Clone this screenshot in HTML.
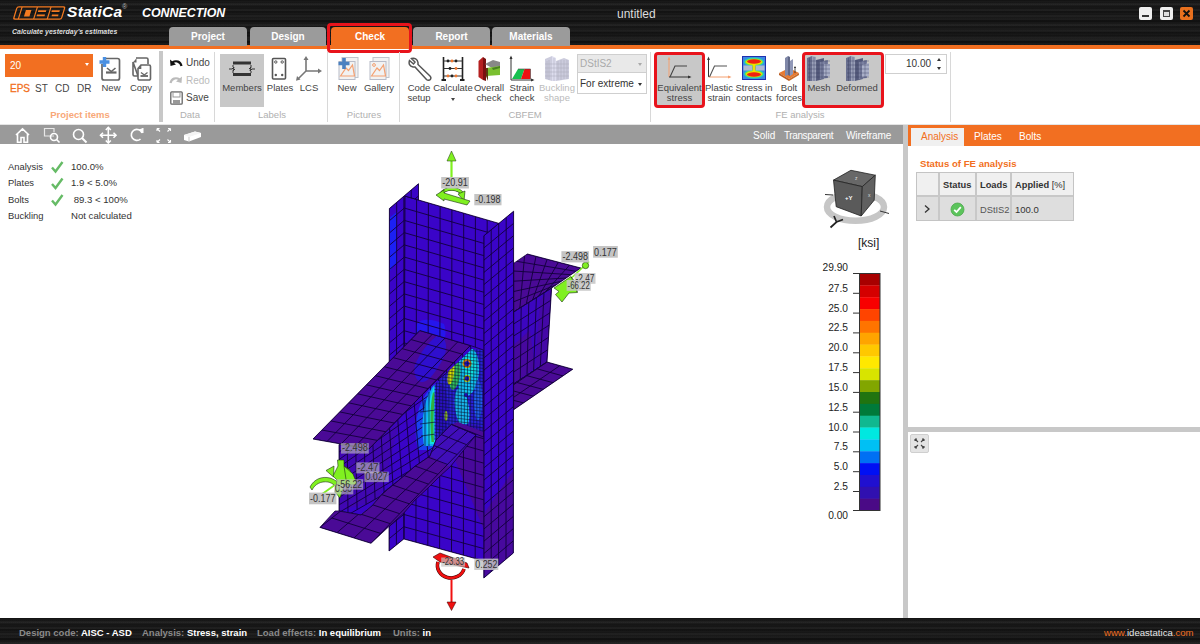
<!DOCTYPE html>
<html><head><meta charset="utf-8">
<style>
*{margin:0;padding:0;box-sizing:border-box}
html,body{width:1200px;height:644px;overflow:hidden;background:#fff;font-family:"Liberation Sans",sans-serif;position:relative}
.a{position:absolute;white-space:nowrap}
.brush{background-color:#0c0c0c;background-image:repeating-linear-gradient(180deg,rgba(255,255,255,0) 0px,rgba(255,255,255,0.05) 1px,rgba(255,255,255,0) 3px),repeating-linear-gradient(180deg,rgba(0,0,0,0) 0px,rgba(0,0,0,0.35) 2px,rgba(0,0,0,0) 5px),repeating-linear-gradient(180deg,rgba(255,255,255,0) 0px,rgba(255,255,255,0.06) 3px,rgba(255,255,255,0) 7px),repeating-linear-gradient(180deg,rgba(255,255,255,0) 0px,rgba(255,255,255,0.04) 5px,rgba(255,255,255,0) 11px)}
.tab{position:absolute;top:27px;height:19px;background:#9b9b9b;border-radius:4px 4px 0 0;color:#fff;font-weight:bold;font-size:10px;text-align:center;line-height:19px}
.lbl{position:absolute;font-size:9.5px;color:#b0b0b0;text-align:center}
.btxt{position:absolute;font-size:9.5px;color:#444;text-align:center;line-height:10px}
.sep{position:absolute;top:52px;width:1px;height:70px;background:#d8d8d8}
</style></head><body>
<!-- title bar -->
<div class="a brush" style="left:0;top:0;width:1200px;height:45px"></div>
<div class="a" style="left:0;top:45px;width:1200px;height:4px;background:#f26f21"></div>
<!-- logo -->
<svg class="a" style="left:0;top:0" width="140" height="40" viewBox="0 0 140 40">
 <g transform="skewX(-17)" fill="#f47a20">
  <rect x="19.3" y="6.9" width="47.8" height="12.2" rx="1.6" fill="none" stroke="#f47a20" stroke-width="1.3"/>
  <rect x="23.6" y="6.9" width="1.2" height="12.2"/>
  <rect x="38.9" y="6.9" width="1.2" height="12.2"/>
  <rect x="52.5" y="6.9" width="1.2" height="12.2"/>
  <rect x="29" y="10" width="5.5" height="6.5"/>
  <rect x="41.5" y="10.3" width="8" height="1.6"/>
  <rect x="41.5" y="14.6" width="8" height="1.6"/>
  <rect x="55" y="10.3" width="8" height="1.6"/>
  <rect x="56.5" y="14.6" width="6.5" height="1.6"/>
 </g>
</svg>
<div class="a" style="left:67px;top:3px;font-size:15.5px;font-style:italic;font-weight:bold;color:#fff;letter-spacing:0.3px">StatiCa</div>
<div class="a" style="left:122px;top:3px;font-size:7px;color:#bbb">®</div>
<div class="a" style="left:12px;top:26.5px;font-size:7.6px;font-style:italic;font-weight:bold;color:#ddd;letter-spacing:0px;transform:scaleX(0.92);transform-origin:0 0">Calculate yesterday's estimates</div>
<div class="a" style="left:142px;top:5.5px;font-size:12.4px;font-style:italic;font-weight:bold;color:#fff;letter-spacing:0px">CONNECTION</div>
<div class="a" style="left:617px;top:7px;font-size:12px;color:#ddd">untitled</div>
<!-- window buttons -->
<div class="a" style="left:1139px;top:7px;width:13px;height:13px;background:#eee;border-radius:2px"><div class="a" style="left:3px;top:8px;width:7px;height:2px;background:#333"></div></div>
<div class="a" style="left:1160px;top:7px;width:13px;height:13px;background:#eee;border-radius:2px"><div class="a" style="left:3px;top:3px;width:7px;height:7px;border:1px solid #444;border-top-width:2px;background:#ddd"></div></div>
<div class="a" style="left:1180px;top:7px;width:13px;height:13px;background:#e8701e;border-radius:2px"></div><svg class="a" style="left:1180px;top:7px" width="13" height="13" viewBox="0 0 13 13"><path d="M3.5 3.5 L9.5 9.5 M9.5 3.5 L3.5 9.5" stroke="#111" stroke-width="1.8"/></svg>
<!-- tabs -->
<div class="tab" style="left:169px;width:78px">Project</div>
<div class="tab" style="left:250px;width:76px">Design</div>
<div class="tab" style="left:331px;width:78px;background:#f26f21">Check</div>
<div class="tab" style="left:413px;width:77px">Report</div>
<div class="tab" style="left:492px;width:78px">Materials</div>
<div class="a" style="left:327px;top:23px;width:85px;height:30px;border:3px solid #e8131b;border-radius:4px"></div>

<!-- ribbon -->

<!-- Project items -->
<div class="a" style="left:5px;top:54px;width:88px;height:23px;background:#f26f21"></div>
<div class="a" style="left:10px;top:60px;font-size:10px;color:#fff">20</div>
<div class="a" style="left:85px;top:63px;width:0;height:0;border-left:2.5px solid transparent;border-right:2.5px solid transparent;border-top:3px solid #fff"></div>
<div class="a" style="left:10px;top:83px;font-size:10px;color:#f26f21;-webkit-text-stroke:0.3px #f26f21">EPS</div>
<div class="a" style="left:35px;top:83px;font-size:10px;color:#444">ST</div>
<div class="a" style="left:55px;top:83px;font-size:10px;color:#444">CD</div>
<div class="a" style="left:77px;top:83px;font-size:10px;color:#444">DR</div>
<svg class="a" style="left:98px;top:55px" width="26" height="28" viewBox="0 0 26 28">
 <path d="M8 3.5 H19.5 a2 2 0 0 1 2 2 V23 a2 2 0 0 1 -2 2 H6 a2 2 0 0 1 -2 -2 V9" fill="none" stroke="#666" stroke-width="1.7"/>
 <path d="M8 17.5 H18.5" stroke="#666" stroke-width="2.2"/>
 <path d="M9 13 L13.3 16.5 L17.5 13" fill="none" stroke="#666" stroke-width="1.6"/>
 <path d="M6.5 2 V12 M1.5 7 H11.5" stroke="#4a90e2" stroke-width="3.4"/>
</svg>
<div class="btxt" style="left:98px;top:83px;width:26px">New</div>
<svg class="a" style="left:130px;top:55px" width="24" height="28" viewBox="0 0 24 28">
 <path d="M6 3 H16.5 a1.5 1.5 0 0 1 1.5 1.5 V9 M8 21 H4.5 a1.5 1.5 0 0 1 -1.5 -1.5 V7 Z" fill="none" stroke="#666" stroke-width="1.6"/>
 <path d="M3 7.5 L6.5 3 V7.5 Z" fill="#666"/>
 <path d="M11 10 H19 a1.5 1.5 0 0 1 1.5 1.5 V23.5 a1.5 1.5 0 0 1 -1.5 1.5 H9.5 a1.5 1.5 0 0 1 -1.5 -1.5 V13.5 Z" fill="#fff" stroke="#666" stroke-width="1.6"/>
 <path d="M8 14 L11.3 10 V14 Z" fill="#666"/>
 <path d="M10.5 21 H18" stroke="#666" stroke-width="1.8"/>
 <path d="M11 17.5 L14.3 20 L17.5 17.5" fill="none" stroke="#666" stroke-width="1.3"/>
</svg>
<div class="btxt" style="left:128px;top:83px;width:26px">Copy</div>
<div class="lbl" style="left:40px;top:109px;width:80px;color:#f8a878;font-weight:bold;font-size:9.5px">Project items</div>
<div class="a" style="left:159px;top:51px;width:4px;height:71px;background:#c8c8c8"></div>
<!-- Data -->
<svg class="a" style="left:169px;top:58px" width="14" height="10" viewBox="0 0 14 10">
 <path d="M12.5 8 C11.5 3.5 7 2 3.5 4.5" fill="none" stroke="#111" stroke-width="2.2"/>
 <path d="M1 1.5 L1.5 8 L7 6.5 Z" fill="#111"/>
</svg>
<div class="a" style="left:186px;top:57px;font-size:10px;color:#444">Undo</div>
<svg class="a" style="left:169px;top:75px" width="14" height="10" viewBox="0 0 14 10">
 <path d="M1.5 8 C2.5 3.5 7 2 10.5 4.5" fill="none" stroke="#bbb" stroke-width="2.2"/>
 <path d="M13 1.5 L12.5 8 L7 6.5 Z" fill="#bbb"/>
</svg>
<div class="a" style="left:186px;top:75px;font-size:10px;color:#bbb">Redo</div>
<svg class="a" style="left:170px;top:91px" width="13" height="14" viewBox="0 0 13 14">
 <rect x="0.8" y="0.8" width="11.4" height="12.4" rx="1" fill="none" stroke="#666" stroke-width="1.3"/>
 <rect x="3" y="1" width="7" height="5" fill="none" stroke="#999" stroke-width="1"/>
 <rect x="3" y="9" width="7" height="4" fill="#999"/>
</svg>
<div class="a" style="left:186px;top:92px;font-size:10px;color:#444">Save</div>
<div class="lbl" style="left:170px;top:109px;width:40px">Data</div>
<div class="sep" style="left:214px"></div>
<!-- Labels -->
<div class="a" style="left:220px;top:54px;width:44px;height:53px;background:#c8c8c8"></div>
<svg class="a" style="left:228px;top:58px" width="28" height="22" viewBox="0 0 28 22">
 <rect x="5" y="3.5" width="18" height="3" fill="#333"/>
 <rect x="5" y="15" width="18" height="3" fill="#333"/>
 <path d="M1 11 H4 L6 9 L5 13 L7 11 M27 11 H24 L22 13 L23 9 L21 11" fill="none" stroke="#333" stroke-width="1"/>
 <path d="M5 7 V9 M23 7 V9 M5 13 V15 M23 13 V15" stroke="#333" stroke-width="1"/>
</svg>
<div class="btxt" style="left:218px;top:83px;width:48px">Members</div>
<svg class="a" style="left:271px;top:57px" width="16" height="24" viewBox="0 0 16 24">
 <rect x="1.5" y="1.5" width="13" height="20.5" rx="1" fill="none" stroke="#555" stroke-width="1.6"/>
 <circle cx="4.8" cy="5" r="1.2" fill="none" stroke="#555" stroke-width="1"/><circle cx="11.2" cy="5" r="1.2" fill="none" stroke="#555" stroke-width="1"/>
 <circle cx="4.8" cy="18" r="1.2" fill="#555"/><circle cx="11.2" cy="18" r="1.2" fill="#555"/>
</svg>
<div class="btxt" style="left:266px;top:83px;width:28px">Plates</div>
<svg class="a" style="left:294px;top:55px" width="30" height="28" viewBox="0 0 30 28">
 <path d="M12 16 V4 M12 16 H25 M12 16 L4 24" stroke="#777" stroke-width="1.6" fill="none"/>
 <path d="M9.5 5 L12 1 L14.5 5 Z M24 13.5 L28 16 L24 18.5 Z M2 25.8 L3 21 L6.5 24.5 Z" fill="#777"/>
</svg>
<div class="btxt" style="left:296px;top:83px;width:26px">LCS</div>
<div class="lbl" style="left:242px;top:109px;width:60px">Labels</div>
<div class="sep" style="left:327px"></div>
<!-- Pictures -->
<svg class="a" style="left:334px;top:55px" width="28" height="26" viewBox="0 0 28 26">
 <rect x="8" y="2.5" width="16" height="20" fill="#f2f2f2" stroke="#c0c4cc" stroke-width="1"/>
 <rect x="5" y="6.5" width="16" height="18" fill="#f2f2f2" stroke="#b8bcc8" stroke-width="1"/>
 <path d="M6.5 21 L12 13 L14.5 15.5 L18.5 10 L20.5 21 Z" fill="none" stroke="#f4a070" stroke-width="1.2"/>
 <path d="M10 3 V14 M4.5 8.5 H15.5" stroke="#4a80c0" stroke-width="3.6"/>
</svg>
<div class="btxt" style="left:334px;top:83px;width:26px">New</div>
<svg class="a" style="left:365px;top:55px" width="28" height="26" viewBox="0 0 28 26">
 <rect x="8" y="2.5" width="16" height="20" fill="#f2f2f2" stroke="#c0c4cc" stroke-width="1"/>
 <rect x="5" y="6.5" width="16" height="18" fill="#f2f2f2" stroke="#b8bcc8" stroke-width="1"/>
 <path d="M6.5 21 L12 13 L14.5 15.5 L18.5 10 L20.5 21 Z" fill="none" stroke="#f4a070" stroke-width="1.2"/>
 <circle cx="9" cy="10" r="1.4" fill="none" stroke="#f4a070" stroke-width="1"/>
</svg>
<div class="btxt" style="left:362px;top:83px;width:34px">Gallery</div>
<div class="lbl" style="left:334px;top:109px;width:60px">Pictures</div>
<div class="sep" style="left:399px"></div>
<!-- CBFEM -->
<svg class="a" style="left:406px;top:56px" width="26" height="26" viewBox="0 0 26 26">
 <path d="M3.5 4.5 C2.5 7.5 3.5 10.5 7 11 L9 11 L20.5 23.5 C21.5 24.5 23.5 24.5 24.3 23.5 C25 22.5 25 21 24 20 L12 8.5 L12 6.5 C11.5 3 8.5 1.5 5.5 2.5 L9 6 L7.5 8 Z" fill="none" stroke="#555" stroke-width="1.5"/>
</svg>
<div class="btxt" style="left:404px;top:83px;width:30px">Code<br>setup</div>
<svg class="a" style="left:441px;top:56px" width="24" height="26" viewBox="0 0 24 26">
 <path d="M2.5 1 V24 M21.5 1 V24" stroke="#222" stroke-width="1.6"/>
 <path d="M2.5 5 H21.5 M2.5 12.5 H21.5 M2.5 20 H21.5" stroke="#333" stroke-width="1"/>
 <path d="M0.5 24 H5 M19 24 H23.5" stroke="#222" stroke-width="2"/>
 <circle cx="7" cy="5" r="1.4" fill="#222"/><circle cx="11" cy="5" r="1.4" fill="#f07830"/><circle cx="15" cy="5" r="1.4" fill="#222"/>
 <circle cx="9" cy="12.5" r="1.4" fill="#222"/><circle cx="15" cy="12.5" r="1.4" fill="#f07830"/>
 <circle cx="7" cy="20" r="1.4" fill="#f07830"/><circle cx="11" cy="20" r="1.4" fill="#222"/><circle cx="15" cy="20" r="1.4" fill="#f07830"/>
</svg>
<div class="btxt" style="left:433px;top:83px;width:40px">Calculate</div>
<div class="a" style="left:451px;top:98px;width:0;height:0;border-left:2.5px solid transparent;border-right:2.5px solid transparent;border-top:3px solid #444"></div>
<svg class="a" style="left:477px;top:56px" width="26" height="26" viewBox="0 0 26 26">
 <path d="M1.5 5 L6 1 V24 L1.5 21 Z" fill="#b52020"/>
 <path d="M6 1 L9 3 V25 L6 24 Z" fill="#7a1010"/>
 <path d="M8 8 L16 4 L23 6 L23 10 L15 12 Z" fill="#888"/>
 <path d="M9 12 L23 10 V19 L9 20 Z" fill="#7ac030"/>
 <path d="M9 20 L11 25 V12 L9 12 Z" fill="#5a3a10"/>
 <path d="M15 12 L23 10 L23 12 L16 14 Z" fill="#4a8020"/>
</svg>
<div class="btxt" style="left:472px;top:83px;width:34px">Overall<br>check</div>
<svg class="a" style="left:509px;top:55px" width="26" height="28" viewBox="0 0 26 28">
 <path d="M2 2 V25 H24" fill="none" stroke="#333" stroke-width="1"/>
 <path d="M0.5 4 L2 0.5 L3.5 4 Z M22 23.5 L25.5 25 L22 26.5 Z" fill="#333"/>
 <path d="M3 24 L9 14 H15.5 L12 24 Z" fill="#17c050"/>
 <path d="M15.5 14 H21.5 V24 H12 Z" fill="#ee1111"/>
 <path d="M9 14 H21.5 V24" fill="none" stroke="#444" stroke-width="0.6"/>
</svg>
<div class="btxt" style="left:507px;top:83px;width:30px">Strain<br>check</div>
<svg class="a" style="left:544px;top:55px" width="27" height="27" viewBox="0 0 27 27">
 <path d="M1 4 L8 1 V26 L1 24 Z" fill="#ccd" />
 <path d="M8 1 L12 3 V26 H8 Z" fill="#dde"/>
 <path d="M12 6 L20 3 L25 5 V24 L12 26 Z" fill="#ccd"/>
 <path d="M3 6 V24 M5 5 V25 M10 3 V26 M14 6 V25 M17 5 V25 M20 5 V24 M23 5 V24 M1 9 H25 M1 13 H25 M1 17 H25 M1 21 H25" stroke="#aab" stroke-width="0.5"/>
</svg>
<div class="btxt" style="left:537px;top:83px;width:40px;color:#bbb">Buckling<br>shape</div>
<div class="a" style="left:577px;top:54px;width:70px;height:40px;border:1px solid #cfcfcf;background:#fff"></div>
<div class="a" style="left:578px;top:55px;width:68px;height:18px;background:#e9e9e9;border-bottom:1px solid #cfcfcf"></div>
<div class="a" style="left:580px;top:58px;font-size:10px;color:#aaa">DStIS2</div>
<div class="a" style="left:638px;top:63px;width:0;height:0;border-left:2.5px solid transparent;border-right:2.5px solid transparent;border-top:3px solid #aaa"></div>
<div class="a" style="left:580px;top:78px;font-size:10px;color:#333">For extreme</div>
<div class="a" style="left:638px;top:83px;width:0;height:0;border-left:2.5px solid transparent;border-right:2.5px solid transparent;border-top:3px solid #333"></div>
<div class="lbl" style="left:495px;top:109px;width:60px">CBFEM</div>
<div class="sep" style="left:650px"></div>
<!-- FE analysis -->
<div class="a" style="left:654px;top:52px;width:51px;height:56px;background:#c8c8c8;border:3px solid #e8131b;border-radius:4px"></div>
<svg class="a" style="left:665px;top:55px" width="30" height="26" viewBox="0 0 30 26">
 <path d="M4 3 V22" stroke="#f4a070" stroke-width="1"/><path d="M2.6 5 L4 1.5 L5.4 5 Z" fill="#f4a070"/>
 <path d="M4 22 H25" stroke="#333" stroke-width="1"/><path d="M23 20.5 L26.5 22 L23 23.5 Z" fill="#333"/>
 <path d="M5 22 L10 11 H22" fill="none" stroke="#444" stroke-width="1.1"/>
</svg>
<div class="btxt" style="left:654px;top:83px;width:51px">Equivalent<br>stress</div>
<svg class="a" style="left:705px;top:55px" width="30" height="26" viewBox="0 0 30 26">
 <path d="M3.5 3 V22" stroke="#333" stroke-width="1"/><path d="M2.1 5 L3.5 1.5 L4.9 5 Z" fill="#333"/>
 <path d="M3.5 22 H25" stroke="#f4a070" stroke-width="1"/><path d="M23 20.5 L26.5 22 L23 23.5 Z" fill="#f4a070"/>
 <path d="M4.5 22 L9.5 11 H22" fill="none" stroke="#555" stroke-width="1.1"/>
</svg>
<div class="btxt" style="left:704px;top:83px;width:30px">Plastic<br>strain</div>
<svg class="a" style="left:742px;top:56px" width="24" height="24" viewBox="0 0 24 24">
 <rect x="0" y="0" width="24" height="24" fill="#2030b0"/>
 <rect x="1" y="1" width="22" height="22" fill="#3a8ae0"/>
 <ellipse cx="12" cy="6" rx="10" ry="4.5" fill="#20d0c0"/>
 <ellipse cx="12" cy="18" rx="10" ry="4.5" fill="#20d0c0"/>
 <ellipse cx="12" cy="6" rx="9" ry="3.5" fill="#90e020"/>
 <ellipse cx="12" cy="18" rx="9" ry="3.5" fill="#90e020"/>
 <ellipse cx="12" cy="6" rx="8" ry="2.8" fill="#f0e000"/>
 <ellipse cx="12" cy="18" rx="8" ry="2.8" fill="#f0e000"/>
 <ellipse cx="12" cy="5.5" rx="7" ry="2.2" fill="#f02010"/>
 <ellipse cx="12" cy="18.5" rx="7" ry="2.2" fill="#f02010"/>
 <rect x="1.5" y="9.5" width="8.5" height="5" fill="#b0b8d0"/>
 <rect x="14" y="9.5" width="8.5" height="5" fill="#b0b8d0"/>
 <rect x="10.5" y="8" width="3" height="8" fill="#f0e000"/>
</svg>
<div class="btxt" style="left:732px;top:83px;width:44px">Stress in<br>contacts</div>
<svg class="a" style="left:777px;top:55px" width="24" height="26" viewBox="0 0 24 26">
 <path d="M2 18 L12 13 L22 18 L12 24 Z" fill="#e87a30"/>
 <path d="M2 18 V20 L12 26 V24 Z" fill="#b85a20"/><path d="M22 18 V20 L12 26 V24 Z" fill="#c86a28"/>
 <path d="M8 3 L11 1 V20 L8 21 Z" fill="#8088a8"/>
 <path d="M11 1 L13 2 V21 L11 20 Z" fill="#606888"/>
 <path d="M13 6 L16 4 V19 L13 21 Z" fill="#9098b8"/>
 <path d="M18 12 V18" stroke="#222" stroke-width="0.8"/><path d="M17 13 L18 11 L19 13 Z" fill="#222"/>
</svg>
<div class="btxt" style="left:771px;top:83px;width:36px">Bolt<br>forces</div>
<div class="a" style="left:802px;top:52px;width:82px;height:56px;background:#c8c8c8;border:3px solid #e8131b;border-radius:4px"></div>
<svg class="a" style="left:806px;top:55px" width="26" height="26" viewBox="0 0 26 26">
 <path d="M1 3 L6 1 V26 H1 Z" fill="#6a7090"/><path d="M6 1 L10 2 V26 H6 Z" fill="#9aa0b8"/>
 <path d="M10 5 L18 3 V24 L10 26 Z" fill="#5a6080"/><path d="M14 7 L22 5 V23 L14 24 Z" fill="#7a80a0"/>
 <path d="M18 9 H24 V21 H18 Z" fill="#aab0c8"/>
 <path d="M2 6 H24 M2 10 H24 M2 14 H24 M2 18 H24 M2 22 H24 M3.5 3 V26 M8 2 V26 M12 5 V25 M16 4 V24 M20 5 V23" stroke="#3a4060" stroke-width="0.4"/>
</svg>
<div class="btxt" style="left:804px;top:83px;width:30px">Mesh</div>
<svg class="a" style="left:845px;top:55px" width="26" height="26" viewBox="0 0 26 26">
 <path d="M1 3 L6 1 V26 H1 Z" fill="#6a7090"/><path d="M6 1 L10 2 V26 H6 Z" fill="#9aa0b8"/>
 <path d="M10 5 L18 3 V24 L10 26 Z" fill="#5a6080"/><path d="M14 7 L22 5 V23 L14 24 Z" fill="#7a80a0"/>
 <path d="M17 10 L24 8 V21 L17 22 Z" fill="#aab0c8"/>
 <path d="M2 6 H24 M2 10 H24 M2 14 H24 M2 18 H24 M2 22 H24 M3.5 3 V26 M8 2 V26 M12 5 V25 M16 4 V24 M20 5 V23" stroke="#3a4060" stroke-width="0.4"/>
</svg>
<div class="btxt" style="left:834px;top:83px;width:46px">Deformed</div>
<div class="a" style="left:885px;top:54px;width:62px;height:20px;border:1px solid #cfcfcf;background:#fff"></div>
<div class="a" style="left:906px;top:58px;font-size:10px;color:#333">10.00</div>
<div class="a" style="left:937px;top:58px;width:0;height:0;border-left:2.5px solid transparent;border-right:2.5px solid transparent;border-bottom:3px solid #333"></div>
<div class="a" style="left:937px;top:67px;width:0;height:0;border-left:2.5px solid transparent;border-right:2.5px solid transparent;border-top:3px solid #333"></div>
<div class="lbl" style="left:760px;top:109px;width:80px">FE analysis</div>
<div class="sep" style="left:950px"></div>
<div class="a" style="left:0;top:124px;width:1200px;height:1px;background:#e4e4e4"></div>


<!-- viewport toolbar -->
<div class="a" style="left:0;top:125px;width:903px;height:19px;background:#9a9a9a"></div>
<div class="a" style="left:903px;top:125px;width:5px;height:493px;background:#c8c8c8"></div>
<div class="a" style="left:908px;top:125px;width:292px;height:21px;background:#f26f21"></div>
<div class="a" style="left:911px;top:128px;width:53px;height:18px;background:#f0f0f0"></div>
<div class="a" style="left:921px;top:131px;font-size:10px;color:#f26f21">Analysis</div>
<div class="a" style="left:974px;top:131px;font-size:10px;color:#fff">Plates</div>
<div class="a" style="left:1019px;top:131px;font-size:10px;color:#fff">Bolts</div>
<div class="a" style="left:753px;top:130px;font-size:10px;color:#fff">Solid</div>
<div class="a" style="left:784px;top:130px;font-size:10px;color:#fff;letter-spacing:-0.4px">Transparent</div>
<div class="a" style="left:846px;top:130px;font-size:10px;color:#fff;letter-spacing:-0.1px">Wireframe</div>

<div class="a brush" style="left:0;top:618px;width:1200px;height:26px"></div>
<svg class="a" style="left:0;top:0" width="1200" height="644" viewBox="0 0 1200 644"><defs><clipPath id="c1"><polygon points="513.6,263.4 527.4,254.0 580.8,268.0 551.6,288.0 513.6,312.0"/></clipPath><clipPath id="c2"><polygon points="513.6,312.0 551.6,288.0 547.0,362.0 513.6,384.0"/></clipPath><clipPath id="c3"><polygon points="513.6,384.0 547.0,362.0 572.8,369.2 513.7,409.7"/></clipPath><clipPath id="c4"><polygon points="389.4,208.5 418.5,183.7 418.5,527.0 389.0,551.0"/></clipPath><clipPath id="c5"><polygon points="404.8,196.0 499.0,223.4 499.0,565.0 404.0,539.0"/></clipPath><clipPath id="c6"><polygon points="483.8,235.8 513.6,211.2 513.4,553.0 483.8,578.0"/></clipPath><clipPath id="c7"><polygon points="339.0,444.5 369.0,449.0 470.4,345.5 483.5,350.0 483.5,437.0 451.4,424.4 436.0,440.0 430.0,456.0 414.0,467.0 398.0,481.0 384.0,492.0 372.0,506.0 361.0,515.0 339.0,511.0"/></clipPath><clipPath id="c8"><polygon points="313.0,439.0 369.0,449.0 470.4,345.5 419.8,330.5"/></clipPath><clipPath id="c9"><polygon points="319.9,527.4 371.0,543.3 388.4,527.0 404.6,512.2 415.0,500.0 428.0,488.0 439.0,477.0 450.0,467.0 476.2,434.8 451.4,424.4 436.0,440.0 430.0,456.0 414.0,467.0 398.0,481.0 384.0,492.0 372.0,506.0 361.0,515.0 339.0,511.0 335.0,511.0"/></clipPath></defs><polygon points="513.6,263.4 527.4,254.0 580.8,268.0 551.6,288.0 513.6,312.0" fill="#4a0a96"/><g clip-path="url(#c1)"><path d="M513.6 250.5L513.6 312.0M524.8 253.4L519.9 308.0M536.0 256.3L526.3 304.0M547.2 259.2L532.6 300.0M558.4 262.2L538.9 296.0M569.6 265.1L545.3 292.0M580.8 268.0L551.6 288.0M513.6 250.5L580.8 268.0M513.6 260.8L575.9 271.3M513.6 271.0L571.1 274.7M513.6 281.2L566.2 278.0M513.6 291.5L561.3 281.3M513.6 301.8L556.5 284.7M513.6 312.0L551.6 288.0" stroke="#12003a" stroke-width="0.9" fill="none"/></g><polygon points="513.6,263.4 527.4,254.0 580.8,268.0 551.6,288.0 513.6,312.0" fill="none" stroke="#12003a" stroke-width="0.8"/><polygon points="513.6,312.0 551.6,288.0 547.0,362.0 513.6,384.0" fill="#3c06c0"/><g clip-path="url(#c2)"><polygon points="513.6,345 530,330 535,368 513.6,384" fill="#4a0a96" opacity="0.8"/><polygon points="540,300 552,288 547,362 535,368" fill="#4a0a96" opacity="0.6"/><path d="M513.6 312.0L513.6 384.0M521.2 307.2L520.3 379.6M528.8 302.4L527.0 375.2M536.4 297.6L533.6 370.8M544.0 292.8L540.3 366.4M551.6 288.0L547.0 362.0M513.6 312.0L551.6 288.0M513.6 324.0L550.8 300.3M513.6 336.0L550.1 312.7M513.6 348.0L549.3 325.0M513.6 360.0L548.5 337.3M513.6 372.0L547.8 349.7M513.6 384.0L547.0 362.0" stroke="#12003a" stroke-width="0.9" fill="none"/></g><polygon points="513.6,312.0 551.6,288.0 547.0,362.0 513.6,384.0" fill="none" stroke="#12003a" stroke-width="0.8"/><polygon points="513.6,384.0 547.0,362.0 572.8,369.2 513.7,409.7" fill="#4a0a96"/><g clip-path="url(#c3)"><path d="M547.0 362.0L487.0 403.0M559.9 365.6L500.4 406.4M572.8 369.2L513.7 409.7M547.0 362.0L572.8 369.2M537.0 368.8L562.9 375.9M527.0 375.7L553.1 382.7M517.0 382.5L543.2 389.4M507.0 389.3L533.4 396.2M497.0 396.2L523.6 402.9M487.0 403.0L513.7 409.7" stroke="#12003a" stroke-width="0.9" fill="none"/></g><polygon points="513.6,384.0 547.0,362.0 572.8,369.2 513.7,409.7" fill="none" stroke="#12003a" stroke-width="0.8"/><polygon points="389.4,208.5 418.5,183.7 418.5,527.0 389.0,551.0" fill="#3a04c8"/><g clip-path="url(#c4)"><polygon points="389,218 397,212 397,262 389,272" fill="#1c20f4"/><path d="M389.4 208.5L389.0 551.0M396.7 202.3L396.4 545.0M403.9 196.1L403.8 539.0M411.2 189.9L411.1 533.0M418.5 183.7L418.5 527.0M389.4 208.5L418.5 183.7M389.4 220.7L418.5 196.0M389.4 233.0L418.5 208.2M389.4 245.2L418.5 220.5M389.3 257.4L418.5 232.7M389.3 269.7L418.5 245.0M389.3 281.9L418.5 257.3M389.3 294.1L418.5 269.5M389.3 306.4L418.5 281.8M389.3 318.6L418.5 294.0M389.3 330.8L418.5 306.3M389.2 343.1L418.5 318.6M389.2 355.3L418.5 330.8M389.2 367.5L418.5 343.1M389.2 379.8L418.5 355.4M389.2 392.0L418.5 367.6M389.2 404.2L418.5 379.9M389.2 416.4L418.5 392.1M389.1 428.7L418.5 404.4M389.1 440.9L418.5 416.7M389.1 453.1L418.5 428.9M389.1 465.4L418.5 441.2M389.1 477.6L418.5 453.4M389.1 489.8L418.5 465.7M389.1 502.1L418.5 478.0M389.0 514.3L418.5 490.2M389.0 526.5L418.5 502.5M389.0 538.8L418.5 514.7M389.0 551.0L418.5 527.0" stroke="#12003a" stroke-width="0.9" fill="none"/></g><polygon points="389.4,208.5 418.5,183.7 418.5,527.0 389.0,551.0" fill="none" stroke="#12003a" stroke-width="0.8"/><polygon points="404.8,196.0 499.0,223.4 499.0,565.0 404.0,539.0" fill="#3a04c8"/><g clip-path="url(#c5)"><path d="M416 326 C418 318 432 318 444 324 C446 330 446 336 444 340 L416 334 Z" fill="#2418f0" opacity="0.9"/><polygon points="455,460 476,436 484,436 484,530" fill="#4a0a96" opacity="0.9"/><polygon points="404,539 404,512 420,520 450,548 484,560" fill="#4a0a96" opacity="0.0"/><path d="M404.8 196.0L404.0 539.0M416.6 199.4L415.9 542.2M428.4 202.8L427.8 545.5M440.1 206.3L439.6 548.8M451.9 209.7L451.5 552.0M463.7 213.1L463.4 555.2M475.4 216.6L475.2 558.5M487.2 220.0L487.1 561.8M499.0 223.4L499.0 565.0M404.8 196.0L499.0 223.4M404.8 208.2L499.0 235.6M404.7 220.5L499.0 247.8M404.7 232.8L499.0 260.0M404.7 245.0L499.0 272.2M404.7 257.2L499.0 284.4M404.6 269.5L499.0 296.6M404.6 281.8L499.0 308.8M404.6 294.0L499.0 321.0M404.5 306.2L499.0 333.2M404.5 318.5L499.0 345.4M404.5 330.8L499.0 357.6M404.5 343.0L499.0 369.8M404.4 355.2L499.0 382.0M404.4 367.5L499.0 394.2M404.4 379.8L499.0 406.4M404.3 392.0L499.0 418.6M404.3 404.2L499.0 430.8M404.3 416.5L499.0 443.0M404.3 428.8L499.0 455.2M404.2 441.0L499.0 467.4M404.2 453.2L499.0 479.6M404.2 465.5L499.0 491.8M404.1 477.8L499.0 504.0M404.1 490.0L499.0 516.2M404.1 502.2L499.0 528.4M404.1 514.5L499.0 540.6M404.0 526.8L499.0 552.8M404.0 539.0L499.0 565.0" stroke="#12003a" stroke-width="0.9" fill="none"/></g><polygon points="404.8,196.0 499.0,223.4 499.0,565.0 404.0,539.0" fill="none" stroke="#12003a" stroke-width="0.8"/><polygon points="483.8,235.8 513.6,211.2 513.4,553.0 483.8,578.0" fill="#3a04c8"/><g clip-path="url(#c6)"><polygon points="483,515 513.6,470 513.6,553 483,578" fill="#4a0a96" opacity="0.85"/><path d="M483.8 235.8L483.8 578.0M491.2 229.7L491.2 571.8M498.7 223.5L498.6 565.5M506.2 217.3L506.0 559.2M513.6 211.2L513.4 553.0M483.8 235.8L513.6 211.2M483.8 248.0L513.6 223.4M483.8 260.2L513.6 235.6M483.8 272.5L513.6 247.8M483.8 284.7L513.6 260.0M483.8 296.9L513.6 272.2M483.8 309.1L513.6 284.4M483.8 321.4L513.5 296.6M483.8 333.6L513.5 308.9M483.8 345.8L513.5 321.1M483.8 358.0L513.5 333.3M483.8 370.2L513.5 345.5M483.8 382.5L513.5 357.7M483.8 394.7L513.5 369.9M483.8 406.9L513.5 382.1M483.8 419.1L513.5 394.3M483.8 431.3L513.5 406.5M483.8 443.6L513.5 418.7M483.8 455.8L513.5 430.9M483.8 468.0L513.5 443.1M483.8 480.2L513.5 455.3M483.8 492.4L513.5 467.6M483.8 504.7L513.4 479.8M483.8 516.9L513.4 492.0M483.8 529.1L513.4 504.2M483.8 541.3L513.4 516.4M483.8 553.6L513.4 528.6M483.8 565.8L513.4 540.8M483.8 578.0L513.4 553.0" stroke="#12003a" stroke-width="0.9" fill="none"/></g><polygon points="483.8,235.8 513.6,211.2 513.4,553.0 483.8,578.0" fill="none" stroke="#12003a" stroke-width="0.8"/><polygon points="339.0,444.5 369.0,449.0 470.4,345.5 483.5,350.0 483.5,437.0 451.4,424.4 436.0,440.0 430.0,456.0 414.0,467.0 398.0,481.0 384.0,492.0 372.0,506.0 361.0,515.0 339.0,511.0" fill="#3a04c8"/><g clip-path="url(#c7)"><polygon points="339,444.5 369,449 400,420 380,500 339,511" fill="#4a0a96" opacity="0.45"/><path d="M434.4,384.8 C418,398 412,425 418,450 L440,450 L440,385 Z" fill="#1a40f0"/><path d="M339.0 444.5L339.0 520.0M347.2 438.3L348.0 514.8M355.4 432.1L357.1 509.6M363.6 425.9L366.1 504.4M371.9 419.8L375.1 499.2M380.1 413.6L384.2 494.1M388.3 407.4L393.2 488.9M396.5 401.2L402.2 483.7M404.7 395.0L411.2 478.5M412.9 388.8L420.3 473.3M421.1 382.6L429.3 468.1M429.3 376.4L438.3 462.9M437.5 370.2L447.4 457.8M445.8 364.1L456.4 452.6M454.0 357.9L465.4 447.4M462.2 351.7L474.5 442.2M470.4 345.5L483.5 437.0M339.0 444.5L470.4 345.5M339.0 452.1L471.7 354.6M339.0 459.6L473.0 363.8M339.0 467.1L474.3 372.9M339.0 474.7L475.6 382.1M339.0 482.2L476.9 391.2M339.0 489.8L478.3 400.4M339.0 497.4L479.6 409.6M339.0 504.9L480.9 418.7M339.0 512.5L482.2 427.9M339.0 520.0L483.5 437.0" stroke="#12003a" stroke-width="0.9" fill="none"/><path d="M434.4,384.8 C424,398 420,420 424,446 L436,446 L436,385 Z" fill="#10a8f4"/><path d="M434.4,386 C428,400 426,420 428,444 L436,444 L436,386 Z" fill="#10e0e0"/><path d="M433,392 C430,405 430,425 431.5,442 L434,442 C433,425 433.5,408 435,394 Z" fill="#30b040"/><path d="M425,400 V446 M429,392 V446 M420,412 L436,410 M420,424 L436,422 M421,436 L436,434" stroke="#0a1030" stroke-width="0.7"/><clipPath id="fine"><polygon points="434.4,384.8 471.9,349 483.5,350 483.5,437 451.4,424.4 436,440 434.4,440"/></clipPath><g clip-path="url(#fine)"><polygon points="434.4,384.8 471.9,349 483.5,350 483.5,437 451.4,424.4 436,440 434.4,440" fill="#2a20d8"/><ellipse cx="468" cy="372" rx="11" ry="24" transform="rotate(5 468 372)" fill="#10c0ec"/><ellipse cx="462" cy="408" rx="7" ry="20" transform="rotate(-8 462 408)" fill="#18b8ec"/><ellipse cx="470" cy="366" rx="6" ry="12" fill="#10e0e0"/><ellipse cx="478" cy="400" rx="4" ry="20" fill="#2060f0"/><ellipse cx="442" cy="412" rx="6" ry="28" fill="#2a10c0"/><ellipse cx="455" cy="376" rx="5" ry="14" transform="rotate(10 455 376)" fill="#30c060"/><ellipse cx="451" cy="374" rx="3" ry="11" transform="rotate(10 451 374)" fill="#d8e000"/><ellipse cx="446" cy="416" rx="1.5" ry="5" fill="#a0d020"/><ellipse cx="468" cy="430" rx="16" ry="6" fill="#3010c0"/><circle cx="467" cy="363.5" r="4.5" fill="#f09000"/><circle cx="467" cy="363.5" r="2.6" fill="#2010c0"/><circle cx="467" cy="378.5" r="3.5" fill="#c0c000"/><circle cx="467" cy="378.5" r="2.2" fill="#2010c0"/><circle cx="466" cy="395" r="2" fill="#2010c0"/><path d="M436.5 340 V445 M439.6 340 V445 M442.7 340 V445 M445.8 340 V445 M448.9 340 V445 M452.0 340 V445 M455.1 340 V445 M458.2 340 V445 M461.3 340 V445 M464.4 340 V445 M467.5 340 V445 M470.6 340 V445 M473.7 340 V445 M476.8 340 V445 M479.9 340 V445 M483.0 340 V445 M430 346.0 L484 352.0 M430 349.3 L484 355.3 M430 352.6 L484 358.6 M430 355.9 L484 361.9 M430 359.2 L484 365.2 M430 362.5 L484 368.5 M430 365.8 L484 371.8 M430 369.1 L484 375.1 M430 372.4 L484 378.4 M430 375.7 L484 381.7 M430 379.0 L484 385.0 M430 382.3 L484 388.3 M430 385.6 L484 391.6 M430 388.9 L484 394.9 M430 392.2 L484 398.2 M430 395.5 L484 401.5 M430 398.8 L484 404.8 M430 402.1 L484 408.1 M430 405.4 L484 411.4 M430 408.7 L484 414.7 M430 412.0 L484 418.0 M430 415.3 L484 421.3 M430 418.6 L484 424.6 M430 421.9 L484 427.9 M430 425.2 L484 431.2 M430 428.5 L484 434.5 M430 431.8 L484 437.8 M430 435.1 L484 441.1 M430 438.4 L484 444.4 M430 441.7 L484 447.7 " stroke="#0a1030" stroke-width="0.55"/></g><polygon points="451.4,424.4 476.2,434.8 483.5,437 483.5,432 458,422" fill="#4a0a96"/></g><polygon points="339.0,444.5 369.0,449.0 470.4,345.5 483.5,350.0 483.5,437.0 451.4,424.4 436.0,440.0 430.0,456.0 414.0,467.0 398.0,481.0 384.0,492.0 372.0,506.0 361.0,515.0 339.0,511.0" fill="none" stroke="#12003a" stroke-width="0.8"/><polygon points="313.0,439.0 369.0,449.0 470.4,345.5 419.8,330.5" fill="#4a0a96"/><g clip-path="url(#c8)"><path d="M440 334 C452 345 445 360 430 378 C420 388 412 378 415 365 C420 352 430 340 440 334 Z" fill="#2a10d8" opacity="0.85"/><path d="M419.8 330.5L313.0 439.0M432.4 334.2L327.0 441.5M445.1 338.0L341.0 444.0M457.8 341.8L355.0 446.5M470.4 345.5L369.0 449.0M419.8 330.5L470.4 345.5M410.9 339.5L461.9 354.1M402.0 348.6L453.5 362.8M393.1 357.6L445.0 371.4M384.2 366.7L436.6 380.0M375.3 375.7L428.1 388.6M366.4 384.8L419.7 397.2M357.5 393.8L411.2 405.9M348.6 402.8L402.8 414.5M339.7 411.9L394.4 423.1M330.8 420.9L385.9 431.8M321.9 430.0L377.4 440.4M313.0 439.0L369.0 449.0" stroke="#12003a" stroke-width="0.9" fill="none"/></g><polygon points="313.0,439.0 369.0,449.0 470.4,345.5 419.8,330.5" fill="none" stroke="#12003a" stroke-width="0.8"/><polygon points="319.9,527.4 371.0,543.3 388.4,527.0 404.6,512.2 415.0,500.0 428.0,488.0 439.0,477.0 450.0,467.0 476.2,434.8 451.4,424.4 436.0,440.0 430.0,456.0 414.0,467.0 398.0,481.0 384.0,492.0 372.0,506.0 361.0,515.0 339.0,511.0 335.0,511.0" fill="#4a0a96"/><g clip-path="url(#c9)"><polygon points="436,440 451.4,424.4 476.2,434.8 450,467 430,456" fill="#3a10d0" opacity="0.6"/><path d="M451.4 424.4L319.9 527.4M459.7 427.9L336.9 532.7M467.9 431.3L354.0 538.0M476.2 434.8L371.0 543.3M451.4 424.4L476.2 434.8M439.4 433.8L466.6 444.7M427.5 443.1L457.1 454.5M415.5 452.5L447.5 464.4M403.6 461.9L437.9 474.3M391.6 471.2L428.4 484.1M379.7 480.6L418.8 494.0M367.7 489.9L409.3 503.8M355.8 499.3L399.7 513.7M343.8 508.7L390.1 523.6M331.9 518.0L380.6 533.4M319.9 527.4L371.0 543.3" stroke="#12003a" stroke-width="0.9" fill="none"/></g><polygon points="319.9,527.4 371.0,543.3 388.4,527.0 404.6,512.2 415.0,500.0 428.0,488.0 439.0,477.0 450.0,467.0 476.2,434.8 451.4,424.4 436.0,440.0 430.0,456.0 414.0,467.0 398.0,481.0 384.0,492.0 372.0,506.0 361.0,515.0 339.0,511.0 335.0,511.0" fill="none" stroke="#12003a" stroke-width="0.8"/><path d="M451.5 181 V160" stroke="#80f020" stroke-width="2.2"/><path d="M447 161 L451.5 151 L456 161 Z" fill="#80f020" stroke="#1a3010" stroke-width="0.5"/><path d="M441 194 A12 9 0 0 1 463 195" fill="none" stroke="#1a3010" stroke-width="3.5"/><path d="M441 194 A12 9 0 0 1 463 195" fill="none" stroke="#80f020" stroke-width="2.5"/><path d="M458 194 L465 191 L464 201 Z" fill="#80f020" stroke="#1a3010" stroke-width="0.6"/><path d="M436 195 L444 190 L444 193 L470 201 L467 205 L444 199 L444 201 Z" fill="#80f020" stroke="#1a3010" stroke-width="0.6"/><rect x="441.2" y="177.0" width="27.7" height="11.5" fill="#c4c4c4" opacity="1.00"/><text x="442.2" y="186.3" font-size="10.5" fill="#333" font-family="Liberation Sans" textLength="25.7" lengthAdjust="spacingAndGlyphs">-20.91</text><rect x="474.3" y="194.0" width="27.2" height="11.3" fill="#c4c4c4" opacity="1.00"/><text x="475.3" y="203.1" font-size="10.5" fill="#333" font-family="Liberation Sans" textLength="25.2" lengthAdjust="spacingAndGlyphs">-0.198</text><path d="M589 261.5 L564 285" stroke="#80f020" stroke-width="1.6"/><circle cx="585.5" cy="265.5" r="3.2" fill="#80f020" stroke="#1a3010" stroke-width="0.6"/><path d="M554 288 L571 276.5 L574 283 L577.5 292.5 L569 293 L562 302 L555.5 294.5 L559 291.5 Z" fill="#80f020" stroke="#1a3010" stroke-width="0.6"/><path d="M571 277 C575 280 577 286 577 292" fill="none" stroke="#1a3010" stroke-width="0.6"/><rect x="561.4" y="251.2" width="27.5" height="11.2" fill="#c4c4c4" opacity="1.00"/><text x="562.4" y="260.2" font-size="10.5" fill="#333" font-family="Liberation Sans" textLength="25.5" lengthAdjust="spacingAndGlyphs">-2.498</text><rect x="593.1" y="246.0" width="24.7" height="11.7" fill="#c4c4c4" opacity="1.00"/><text x="594.1" y="255.5" font-size="10.5" fill="#333" font-family="Liberation Sans" textLength="22.7" lengthAdjust="spacingAndGlyphs">0.177</text><rect x="574.5" y="273.0" width="21.0" height="10.8" fill="#c4c4c4" opacity="0.85"/><text x="575.5" y="281.6" font-size="10.5" fill="#333" font-family="Liberation Sans" textLength="19.0" lengthAdjust="spacingAndGlyphs">-2.47</text><rect x="566.6" y="280.0" width="24.2" height="10.8" fill="#c4c4c4" opacity="0.85"/><text x="567.6" y="288.6" font-size="10.5" fill="#333" font-family="Liberation Sans" textLength="22.2" lengthAdjust="spacingAndGlyphs">-66.22</text><path d="M318 497 L346 477" stroke="#80f020" stroke-width="1.8"/><circle cx="318.5" cy="497" r="3.4" fill="#80f020" stroke="#1a3010" stroke-width="0.6"/><path d="M310 487 C314 479 322 476 330 478 C336 480 341 484 344 490 L340 492 C337 487 333 483 328 482 C321 481 315 484 312 490 Z" fill="#80f020" stroke="#1a3010" stroke-width="0.6"/><path d="M326 470.5 L334 466 L333.5 477 Z" fill="#80f020" stroke="#1a3010" stroke-width="0.6"/><path d="M337.5 460 L344 460 L344 466 L350 470 L352 482 L344 486 L340 498 L335 492 L337 480 L333 476 L338 466 Z" fill="#80f020" stroke="#1a3010" stroke-width="0.6"/><path d="M344 466 L353 474 L357 484 L347 486 Z" fill="#80f020" stroke="#1a3010" stroke-width="0.6"/><rect x="341.0" y="443.1" width="27.8" height="10.5" fill="#c4c4c4" opacity="0.60"/><text x="342.0" y="451.4" font-size="10.5" fill="#333" font-family="Liberation Sans" textLength="25.8" lengthAdjust="spacingAndGlyphs">-2.498</text><rect x="356.2" y="462.4" width="23.3" height="11.0" fill="#c4c4c4" opacity="0.60"/><text x="357.2" y="471.2" font-size="10.5" fill="#333" font-family="Liberation Sans" textLength="21.3" lengthAdjust="spacingAndGlyphs">-2.47</text><rect x="364.4" y="471.7" width="24.4" height="10.4" fill="#c4c4c4" opacity="0.60"/><text x="365.4" y="479.9" font-size="10.5" fill="#333" font-family="Liberation Sans" textLength="22.4" lengthAdjust="spacingAndGlyphs">0.027</text><rect x="334.0" y="484.5" width="19.3" height="9.9" fill="#c4c4c4" opacity="0.60"/><text x="335.0" y="492.2" font-size="10.5" fill="#333" font-family="Liberation Sans" textLength="17.3" lengthAdjust="spacingAndGlyphs">0.00</text><rect x="336.4" y="479.2" width="26.8" height="10.5" fill="#c4c4c4" opacity="0.60"/><text x="337.4" y="487.5" font-size="10.5" fill="#333" font-family="Liberation Sans" textLength="24.8" lengthAdjust="spacingAndGlyphs">-56.22</text><rect x="309.0" y="492.6" width="27.4" height="11.7" fill="#c4c4c4" opacity="1.00"/><text x="310.0" y="502.1" font-size="10.5" fill="#333" font-family="Liberation Sans" textLength="25.4" lengthAdjust="spacingAndGlyphs">-0.177</text><path d="M451.5 580 V603" stroke="#f01010" stroke-width="2"/><path d="M447 602 L456 602 L451.5 610.5 Z" fill="#f01010" stroke="#300000" stroke-width="0.5"/><path d="M438 562 A13 12 0 0 0 464 569" fill="none" stroke="#300000" stroke-width="3.6"/><path d="M438 562 A13 12 0 0 0 464 569" fill="none" stroke="#f01010" stroke-width="2.6"/><path d="M433 557 L440 553 L467 563 L469 568 L440 562 Z" fill="#f01010" stroke="#300000" stroke-width="0.6"/><rect x="441.2" y="557.5" width="23.9" height="9.2" fill="#c4c4c4" opacity="0.70"/><text x="442.2" y="564.5" font-size="10.5" fill="#333" font-family="Liberation Sans" textLength="21.9" lengthAdjust="spacingAndGlyphs">-23.33</text><rect x="474.3" y="558.6" width="24.0" height="11.4" fill="#c4c4c4" opacity="0.85"/><text x="475.3" y="567.8" font-size="10.5" fill="#333" font-family="Liberation Sans" textLength="22.0" lengthAdjust="spacingAndGlyphs">0.252</text></svg>

<!-- left status -->
<div class="a" style="left:8px;top:159px;font-size:9.4px;color:#333;line-height:16.35px">Analysis<br>Plates<br>Bolts<br>Buckling</div>
<svg class="a" style="left:50px;top:160px" width="14" height="48" viewBox="0 0 14 48">
 <path d="M2 7.5 L5.5 11.5 L12.5 2 M2 24 L5.5 28 L12.5 18.5 M2 40.5 L5.5 44.5 L12.5 35" fill="none" stroke="#66bb66" stroke-width="2.4"/>
</svg>
<div class="a" style="left:71px;top:159px;font-size:9.6px;color:#333;line-height:16.35px">100.0%<br>1.9 &lt; 5.0%<br>&nbsp;89.3 &lt; 100%<br>Not calculated</div>

<!-- toolbar icons -->
<svg class="a" style="left:0;top:125px" width="210" height="19" viewBox="0 125 210 19">
 <g fill="none" stroke="#fff" stroke-width="1.6">
  <path d="M16 135 L22.5 128.8 L29 135 M17.5 133.5 V142.3 H21 V137.5 H24 V142.3 H27.5 V133.5"/>
  <path d="M54 136 H44.5 V128.5 H54 V132" stroke="#e8e8e8" stroke-width="1.2"/>
  <circle cx="54" cy="137" r="3.5"/><path d="M56.5 139.5 L59.5 142.5"/>
  <circle cx="78.5" cy="134.5" r="5"/><path d="M82 138 L86.5 142.5" stroke-width="2"/>
  <path d="M108.3 127.5 V143 M100.5 135.2 H116"/>
  <path d="M105.8 130 L108.3 127.5 L110.8 130 M105.8 140.5 L108.3 143 L110.8 140.5 M103 132.7 L100.5 135.2 L103 137.7 M113.5 132.7 L116 135.2 L113.5 137.7"/>
  <path d="M142 133 A5.5 5.5 0 1 0 140.5 139"/>
  <path d="M139 129.5 L143 133 L143 128" fill="#fff" stroke-width="1"/>
  <path d="M157 128.5 L160 131.5 M157 128.5 H159.5 M157 128.5 V131 M170.5 128.5 L167.5 131.5 M170.5 128.5 H168 M170.5 128.5 V131 M157 142.5 L160 139.5 M157 142.5 H159.5 M157 142.5 V140 M170.5 142.5 L167.5 139.5 M170.5 142.5 H168 M170.5 142.5 V140" stroke-width="1.1"/>
 </g>
 <path d="M184 135 L195 131.5 L201 133 L201 137 L189 141.5 L184 140 Z" fill="#fff"/>
 <path d="M184 135 L195 131.5 L201 133 L189 137 Z" fill="#f4f4f4"/>
 <path d="M189 137 L189 141.5" stroke="#bbb" stroke-width="0.8"/>
</svg>

<!-- colorbar -->
<div class="a" style="left:858px;top:236px;font-size:12px;color:#222">[ksi]</div>
<svg class="a" style="left:820px;top:260px" width="70" height="265" viewBox="820 260 70 265">
 <g id="cb"></g>
 <rect x="859.5" y="273.50" width="20.5" height="12.15" fill="#a80000"/><rect x="859.5" y="285.35" width="20.5" height="12.15" fill="#d40000"/><rect x="859.5" y="297.20" width="20.5" height="12.15" fill="#f80000"/><rect x="859.5" y="309.05" width="20.5" height="12.15" fill="#ff4400"/><rect x="859.5" y="320.90" width="20.5" height="12.15" fill="#ff7400"/><rect x="859.5" y="332.75" width="20.5" height="12.15" fill="#ffa400"/><rect x="859.5" y="344.60" width="20.5" height="12.15" fill="#ffc800"/><rect x="859.5" y="356.45" width="20.5" height="12.15" fill="#ffe800"/><rect x="859.5" y="368.30" width="20.5" height="12.15" fill="#d8e400"/><rect x="859.5" y="380.15" width="20.5" height="12.15" fill="#82a600"/><rect x="859.5" y="392.00" width="20.5" height="12.15" fill="#207410"/><rect x="859.5" y="403.85" width="20.5" height="12.15" fill="#007a3a"/><rect x="859.5" y="415.70" width="20.5" height="12.15" fill="#10b890"/><rect x="859.5" y="427.55" width="20.5" height="12.15" fill="#00e8e0"/><rect x="859.5" y="439.40" width="20.5" height="12.15" fill="#00c0f4"/><rect x="859.5" y="451.25" width="20.5" height="12.15" fill="#0070f4"/><rect x="859.5" y="463.10" width="20.5" height="12.15" fill="#0010f4"/><rect x="859.5" y="474.95" width="20.5" height="12.15" fill="#2010d0"/><rect x="859.5" y="486.80" width="20.5" height="12.15" fill="#3010b0"/><rect x="859.5" y="498.65" width="20.5" height="12.15" fill="#4a0a86"/>
 <rect x="859.5" y="273.5" width="20.5" height="237" fill="none" stroke="#333" stroke-width="1"/>
 <path d="M853 273.5 H859.5" stroke="#333" stroke-width="1"/><text x="848" y="271.0" font-size="10.2" fill="#222" text-anchor="end" font-family="Liberation Sans">29.90</text><path d="M853 293.3 H859.5" stroke="#333" stroke-width="1"/><text x="848" y="291.8" font-size="10.2" fill="#222" text-anchor="end" font-family="Liberation Sans">27.5</text><path d="M853 313.1 H859.5" stroke="#333" stroke-width="1"/><text x="848" y="311.6" font-size="10.2" fill="#222" text-anchor="end" font-family="Liberation Sans">25.0</text><path d="M853 332.9 H859.5" stroke="#333" stroke-width="1"/><text x="848" y="331.4" font-size="10.2" fill="#222" text-anchor="end" font-family="Liberation Sans">22.5</text><path d="M853 352.8 H859.5" stroke="#333" stroke-width="1"/><text x="848" y="351.3" font-size="10.2" fill="#222" text-anchor="end" font-family="Liberation Sans">20.0</text><path d="M853 372.6 H859.5" stroke="#333" stroke-width="1"/><text x="848" y="371.1" font-size="10.2" fill="#222" text-anchor="end" font-family="Liberation Sans">17.5</text><path d="M853 392.4 H859.5" stroke="#333" stroke-width="1"/><text x="848" y="390.9" font-size="10.2" fill="#222" text-anchor="end" font-family="Liberation Sans">15.0</text><path d="M853 412.2 H859.5" stroke="#333" stroke-width="1"/><text x="848" y="410.7" font-size="10.2" fill="#222" text-anchor="end" font-family="Liberation Sans">12.5</text><path d="M853 432.0 H859.5" stroke="#333" stroke-width="1"/><text x="848" y="430.5" font-size="10.2" fill="#222" text-anchor="end" font-family="Liberation Sans">10.0</text><path d="M853 451.8 H859.5" stroke="#333" stroke-width="1"/><text x="848" y="450.3" font-size="10.2" fill="#222" text-anchor="end" font-family="Liberation Sans">7.5</text><path d="M853 471.7 H859.5" stroke="#333" stroke-width="1"/><text x="848" y="470.2" font-size="10.2" fill="#222" text-anchor="end" font-family="Liberation Sans">5.0</text><path d="M853 491.5 H859.5" stroke="#333" stroke-width="1"/><text x="848" y="490.0" font-size="10.2" fill="#222" text-anchor="end" font-family="Liberation Sans">2.5</text><path d="M853 510.5 H859.5" stroke="#333" stroke-width="1"/><text x="848" y="519.0" font-size="10.2" fill="#222" text-anchor="end" font-family="Liberation Sans">0.00</text></svg>

<!-- view cube -->
<svg class="a" style="left:815px;top:160px" width="80" height="70" viewBox="815 160 80 70">
 <ellipse cx="855.5" cy="207" rx="28.5" ry="13.8" fill="none" stroke="#c6c6c6" stroke-width="6.5"/>
 <path d="M825 194.5 L833 195" stroke="#333" stroke-width="1"/>
 <path d="M880 211 L889 213.5" stroke="#333" stroke-width="1"/>
 <path d="M833.5 180.1 L850.9 170.3 L875.3 175.2 L862.3 186.6 Z" fill="#686868" stroke="#222" stroke-width="0.8"/>
 <path d="M833.5 180.1 L862.3 186.6 L861.2 216 L836.2 206.7 Z" fill="#5a5a5a" stroke="#222" stroke-width="0.8"/>
 <path d="M862.3 186.6 L875.3 175.2 L874.2 200.2 L861.2 216 Z" fill="#606060" stroke="#222" stroke-width="0.8"/>
 <text x="845" y="200" font-size="6" fill="#fff" font-family="Liberation Sans" font-weight="bold">+Y</text>
 <text x="855" y="180" font-size="5" fill="#ddd" font-family="Liberation Sans">z</text>
 <text x="868" y="197" font-size="5" fill="#ddd" font-family="Liberation Sans">x</text>
 <path d="M830.5 227.5 L836.5 222 L843 219.5 M836.5 222 L834 216" stroke="#222" stroke-width="1.7" fill="none"/>
</svg>

<!-- right panel -->
<div class="a" style="left:920px;top:157.5px;font-size:9.6px;font-weight:bold;color:#f26f21">Status of FE analysis</div>
<div class="a" style="left:916px;top:172px;width:158px;height:49px;background:#dedede;border:1px solid #c4c4c4"></div>
<div class="a" style="left:917px;top:173px;width:156px;height:24px;background:#f0f0f0;border-bottom:2px solid #c8c8c8"></div>
<div class="a" style="left:938px;top:173px;width:2px;height:47px;background:#c8c8c8"></div>
<div class="a" style="left:975px;top:173px;width:2px;height:47px;background:#c8c8c8"></div>
<div class="a" style="left:1010px;top:173px;width:2px;height:47px;background:#c8c8c8"></div>
<div class="a" style="left:943px;top:180px;font-size:9.3px;font-weight:bold;color:#333">Status</div>
<div class="a" style="left:980px;top:180px;font-size:9.3px;font-weight:bold;color:#333">Loads</div>
<div class="a" style="left:1015px;top:180px;font-size:9.3px;font-weight:bold;color:#333">Applied <span style="font-weight:normal">[%]</span></div>
<svg class="a" style="left:923px;top:204px" width="8" height="10" viewBox="0 0 8 10"><path d="M2 1.5 L6 5 L2 8.5" fill="none" stroke="#333" stroke-width="1.3"/></svg>
<svg class="a" style="left:950px;top:202px" width="15" height="15" viewBox="0 0 15 15"><circle cx="7.5" cy="7.5" r="6.5" fill="#5cc45c" stroke="#4aa84a" stroke-width="0.8"/><path d="M4.2 7.8 L6.5 10 L10.8 5.2" fill="none" stroke="#fff" stroke-width="1.8"/></svg>
<div class="a" style="left:980px;top:204.5px;font-size:9.3px;color:#555">DStIS2</div>
<div class="a" style="left:1015px;top:204px;font-size:9.5px;color:#333">100.0</div>
<div class="a" style="left:910px;top:434px;width:19px;height:19px;background:#e4e4e4;border:1px solid #cfcfcf;border-radius:2px"></div>
<svg class="a" style="left:910px;top:434px" width="19" height="19" viewBox="0 0 19 19"><path d="M5 5 L8 8 M5 5 H7 M5 5 V7 M14 5 L11 8 M14 5 H12 M14 5 V7 M5 14 L8 11 M5 14 H7 M5 14 V12 M14 14 L11 11 M14 14 H12 M14 14 V12" stroke="#444" stroke-width="1.1" fill="none"/></svg>

<!-- status bar text -->
<div class="a" style="left:19px;top:627px;font-size:9.5px;font-weight:bold;color:#8a8a8a">Design code: <span style="color:#fff">AISC - ASD</span></div>
<div class="a" style="left:142px;top:627px;font-size:9.5px;font-weight:bold;color:#8a8a8a">Analysis: <span style="color:#fff">Stress, strain</span></div>
<div class="a" style="left:257px;top:627px;font-size:9.5px;font-weight:bold;color:#8a8a8a">Load effects: <span style="color:#fff">In equilibrium</span></div>
<div class="a" style="left:393px;top:627px;font-size:9.5px;font-weight:bold;color:#8a8a8a">Units: <span style="color:#fff">in</span></div>
<div class="a" style="left:1104px;top:627px;font-size:9.6px;color:#e8e8e8"><span style="color:#f26f21">www.</span>ideastatica<span style="color:#f26f21">.com</span></div>

<div class="a" style="left:908px;top:427px;width:292px;height:5px;background:#c8c8c8"></div>

<!-- status bar -->
</body></html>
